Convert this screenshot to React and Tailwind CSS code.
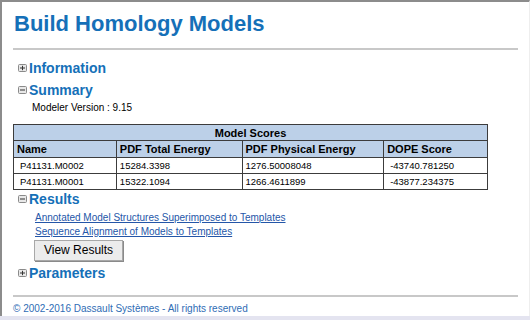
import React from 'react';

const ToggleBox = ({ open }) => (
  <svg width="9" height="8" viewBox="0 0 9 8" className="shrink-0">
    <rect x="0.5" y="0.5" width="8" height="7" rx="1" fill="#e8e8e8" stroke="#8a8a8a" />
    <path d="M2 4h5" stroke="#333" strokeWidth="1" />
    {!open && <path d="M4.5 1.8v4.4" stroke="#333" strokeWidth="1" />}
  </svg>
);

const Section = ({ title, open, className = '' }) => (
  <div className={`flex items-center gap-[2px] pl-[5px] h-[18px] shrink-0 ${className}`}>
    <ToggleBox open={open} />
    <span className="text-[14px] leading-[18px] font-bold text-[#1570b8]">{title}</span>
  </div>
);

const rows = [
  ['P41131.M0002', '15284.3398', '1276.50008048', '-43740.781250'],
  ['P41131.M0001', '15322.1094', '1266.4611899', '-43877.234375'],
];

export default function App() {
  return (
    <div className="w-[530px] h-[320px] bg-white overflow-hidden font-['Liberation_Sans',Arial,sans-serif]">
      <div className="h-[316px] border-t-2 border-l-2 border-[#8c8c8c] border-r border-r-[#eeeeee] flex flex-col pl-[11px] pr-[11px]">
        <h1 className="shrink-0 mt-[9px] ml-[1px] text-[22px] leading-[26px] font-bold text-[#1570b8]">
          Build Homology Models
        </h1>
        <div className="shrink-0 mt-[11px] h-[2px] bg-[#c8c8c8]" />

        <Section title="Information" className="mt-[9px]" />
        <Section title="Summary" open className="mt-[4px]" />
        <div className="shrink-0 mt-[3px] pl-[19px] text-[10px] leading-[12px] text-black">Modeler Version : 9.15</div>

        <table className="shrink-0 mt-[10px] w-[475px] text-black border border-[#3c3c3c]">
          <colgroup>
            <col className="w-[103px]" />
            <col className="w-[126px]" />
            <col className="w-[142px]" />
            <col className="w-[104px]" />
          </colgroup>
          <thead>
            <tr className="bg-[#bcd0e8] h-[16px]">
              <th colSpan={4} className="border border-[#3c3c3c] text-[11px] leading-[14px] font-bold text-center p-0">
                Model Scores
              </th>
            </tr>
            <tr className="bg-[#bcd0e8] h-[17px]">
              {['Name', 'PDF Total Energy', 'PDF Physical Energy', 'DOPE Score'].map((h) => (
                <th key={h} className="border border-[#3c3c3c] text-[11px] leading-[14px] font-bold text-left px-[3px] py-0">
                  {h}
                </th>
              ))}
            </tr>
          </thead>
          <tbody>
            {rows.map((r) => (
              <tr key={r[0]} className="h-[16px]">
                <td className="border border-[#3c3c3c] text-[9.5px] leading-[12px] pl-[6px] py-0">{r[0]}</td>
                <td className="border border-[#3c3c3c] text-[9.5px] leading-[12px] pl-[3px] py-0">{r[1]}</td>
                <td className="border border-[#3c3c3c] text-[9.5px] leading-[12px] pl-[3px] py-0">{r[2]}</td>
                <td className="border border-[#3c3c3c] text-[9.5px] leading-[12px] pl-[6px] py-0">{r[3]}</td>
              </tr>
            ))}
          </tbody>
        </table>

        <Section title="Results" open />
        <div className="shrink-0 mt-[3px] pl-[22px] flex flex-col text-[10px] leading-[14px]">
          <a href="#" className="underline text-[#2456a8] w-fit">Annotated Model Structures Superimposed to Templates</a>
          <a href="#" className="underline text-[#2456a8] w-fit">Sequence Alignment of Models to Templates</a>
        </div>
        <div className="shrink-0 mt-[1px] pl-[21px] flex">
          <button className="w-[89px] h-[21px] bg-[#ececec] border border-[#a8a8a8] shadow-[1px_1px_0_#8a8a8a] text-[12px] leading-[19px] text-black">
            View Results
          </button>
        </div>

        <Section title="Parameters" className="mt-[3px]" />
        <div className="shrink-0 mt-[13px] h-[2px] bg-[#c8c8c8]" />
        <div className="shrink-0 mt-[6px] text-[10px] leading-[12px] text-[#2f6db5]">
          © 2002-2016 Dassault Systèmes - All rights reserved
        </div>
      </div>
      <div className="h-[4px] bg-[#e4e4f0]" />
    </div>
  );
}
